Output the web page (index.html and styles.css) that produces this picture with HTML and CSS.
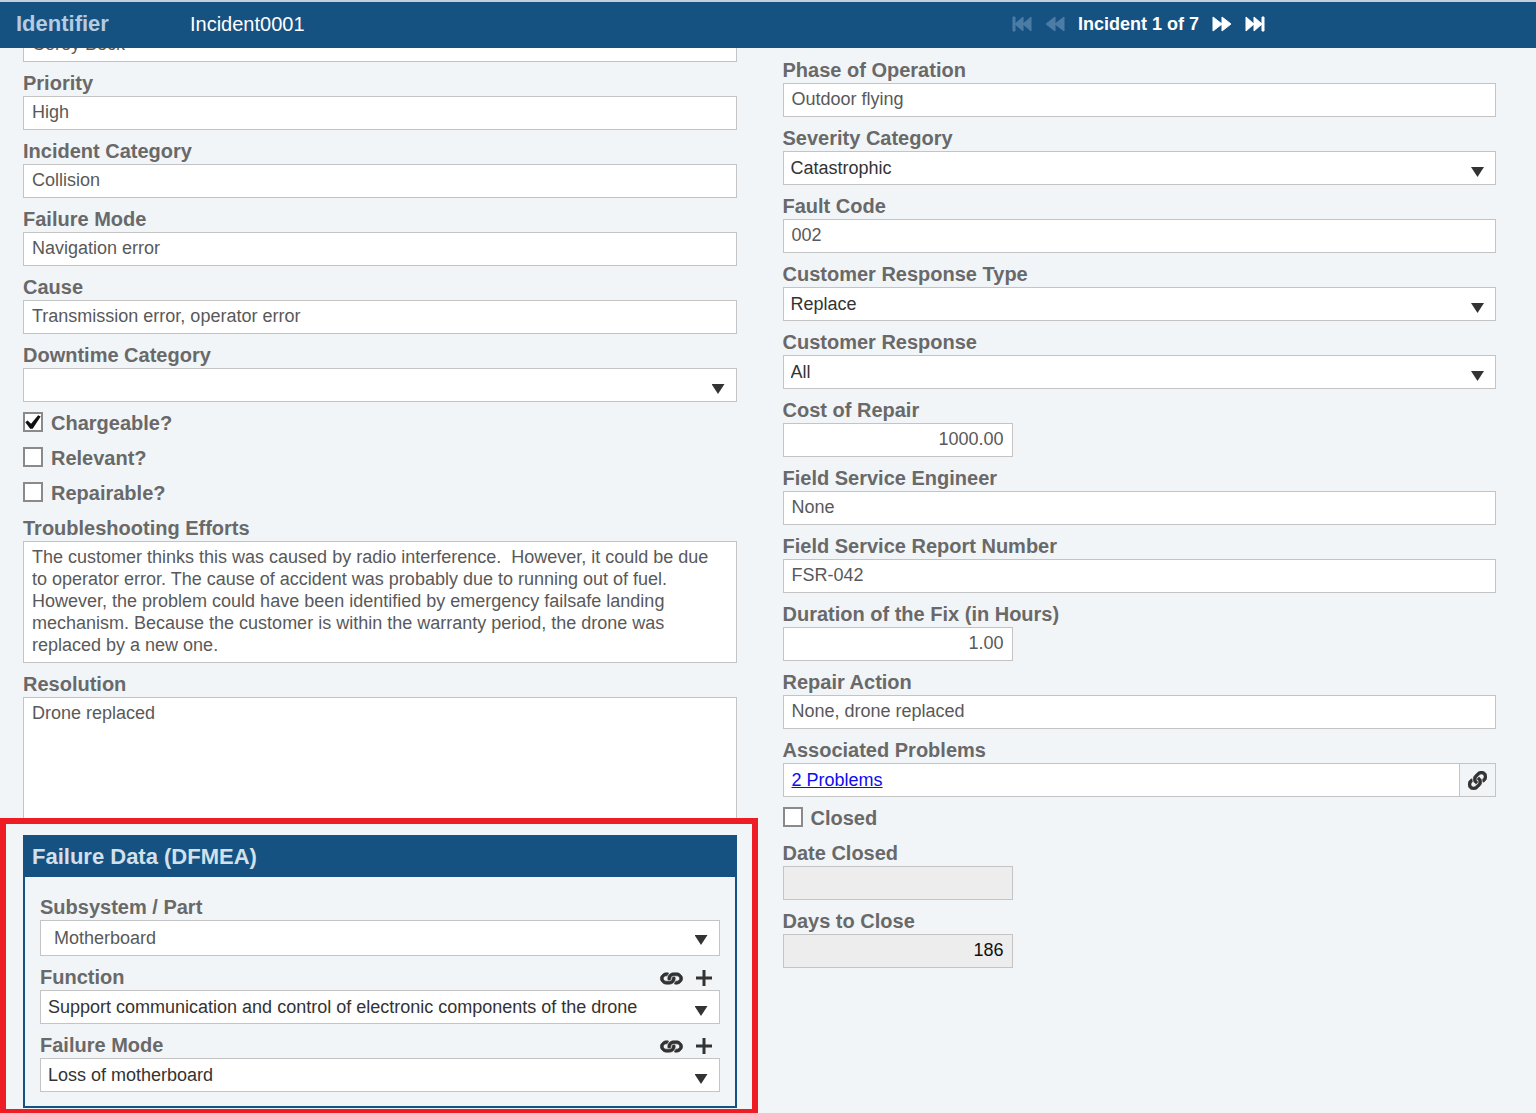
FILE: index.html
```html
<!DOCTYPE html>
<html lang="en">
<head>
<meta charset="UTF-8">
<meta name="viewport" content="width=device-width, initial-scale=1.0">
<title>Incident0001</title>
<link rel="stylesheet" href="styles.css">
</head>
<body>
  <svg class="sprite" aria-hidden="true">
    <symbol id="icon-link" viewBox="0 0 512 512">
      <path d="M326.612 185.391c59.747 59.809 58.927 155.698.36 214.59-.11.12-.24.25-.36.37l-67.2 67.2c-59.27 59.27-155.699 59.262-214.96 0-59.27-59.26-59.27-155.7 0-214.96l37.106-37.106c9.84-9.84 26.786-3.3 27.294 10.606.648 17.722 3.826 35.527 9.69 52.721 1.986 5.822.567 12.262-3.783 16.612l-13.087 13.087c-28.026 28.026-28.905 73.66-1.155 101.96 28.024 28.579 74.086 28.749 102.325.51l67.2-67.19c28.191-28.191 28.073-73.757 0-101.83-3.701-3.694-7.429-6.564-10.341-8.569a16.037 16.037 0 0 1-6.947-12.606c-.396-10.567 3.348-21.456 11.698-29.806l21.054-21.055c5.521-5.521 14.182-6.199 20.584-1.731a152.482 152.482 0 0 1 20.522 17.197zM467.547 44.449c-59.261-59.262-155.69-59.27-214.96 0l-67.2 67.2c-.12.12-.25.25-.36.37-58.566 58.892-59.387 154.781.36 214.59a152.454 152.454 0 0 0 20.521 17.196c6.402 4.468 15.064 3.789 20.584-1.731l21.054-21.055c8.35-8.35 12.094-19.239 11.698-29.806a16.037 16.037 0 0 0-6.947-12.606c-2.912-2.005-6.64-4.875-10.341-8.569-28.073-28.073-28.191-73.639 0-101.83l67.2-67.19c28.239-28.239 74.3-28.069 102.325.51 27.75 28.3 26.872 73.934-1.155 101.96l-13.087 13.087c-4.35 4.35-5.769 10.79-3.783 16.612 5.864 17.194 9.042 34.999 9.69 52.721.509 13.906 17.454 20.446 27.294 10.606l37.106-37.106c59.271-59.259 59.271-155.699.001-214.959z"/>
    </symbol>
    <symbol id="icon-next" viewBox="0 0 20 16">
      <path d="M1 1L10 8V1L19 8L10 15V8L1 15Z" />
    </symbol>
    <symbol id="icon-last" viewBox="0 0 20 16">
      <path d="M1 1L9 8V1L17 8V1H19V15H17V8L9 15V8L1 15Z" />
    </symbol>
  </svg>

  <header class="header">
    <span class="header-label">Identifier</span>
    <span class="header-value">Incident0001</span>
    <nav class="pager">
      <button class="pager-btn flip" aria-label="First incident" disabled><svg><use href="#icon-last"/></svg></button>
      <button class="pager-btn flip" aria-label="Previous incident" disabled><svg><use href="#icon-next"/></svg></button>
      <span class="pager-text">Incident 1 of 7</span>
      <button class="pager-btn" aria-label="Next incident"><svg><use href="#icon-next"/></svg></button>
      <button class="pager-btn" aria-label="Last incident"><svg><use href="#icon-last"/></svg></button>
    </nav>
  </header>

  <main class="form">
    <div class="column column-left">
      <div class="field">
        <input class="control" type="text" aria-label="Reported By" value="Corey Beck">
      </div>
      <div class="field">
        <label for="priority">Priority</label>
        <input class="control" type="text" id="priority" value="High">
      </div>
      <div class="field">
        <label for="incidentCategory">Incident Category</label>
        <input class="control" type="text" id="incidentCategory" value="Collision">
      </div>
      <div class="field">
        <label for="failureMode">Failure Mode</label>
        <input class="control" type="text" id="failureMode" value="Navigation error">
      </div>
      <div class="field">
        <label for="cause">Cause</label>
        <input class="control" type="text" id="cause" value="Transmission error, operator error">
      </div>
      <div class="field">
        <label for="downtime">Downtime Category</label>
        <div class="select">
          <select class="control" id="downtime"><option></option></select>
        </div>
      </div>
      <div class="check">
        <input type="checkbox" id="chargeable" checked>
        <label for="chargeable">Chargeable?</label>
      </div>
      <div class="check">
        <input type="checkbox" id="relevant">
        <label for="relevant">Relevant?</label>
      </div>
      <div class="check">
        <input type="checkbox" id="repairable">
        <label for="repairable">Repairable?</label>
      </div>
      <div class="field">
        <label for="efforts">Troubleshooting Efforts</label>
        <textarea class="control" id="efforts">The customer thinks this was caused by radio interference.  However, it could be due to operator error. The cause of accident was probably due to running out of fuel. However, the problem could have been identified by emergency failsafe landing mechanism. Because the customer is within the warranty period, the drone was replaced by a new one.</textarea>
      </div>
      <div class="field">
        <label for="resolution">Resolution</label>
        <textarea class="control" id="resolution">Drone replaced</textarea>
      </div>

      <section class="panel">
        <h2 class="panel-title">Failure Data (DFMEA)</h2>
        <div class="panel-body">
          <div class="field">
            <label for="part">Subsystem / Part</label>
            <div class="select select-tall">
              <select class="control" id="part"><option>Motherboard</option></select>
            </div>
          </div>
          <div class="field">
            <div class="field-head">
              <label for="function">Function</label>
              <button class="icon-btn icon-btn-link" aria-label="Link function"><svg class="icon-link"><use href="#icon-link"/></svg></button>
              <button class="icon-btn" aria-label="Add function"><svg class="icon-plus" viewBox="0 0 16 16"><path d="M8 0V16M0 8H16"/></svg></button>
            </div>
            <div class="select">
              <select class="control" id="function"><option>Support communication and control of electronic components of the drone</option></select>
            </div>
          </div>
          <div class="field">
            <div class="field-head">
              <label for="dfmeaMode">Failure Mode</label>
              <button class="icon-btn icon-btn-link" aria-label="Link failure mode"><svg class="icon-link"><use href="#icon-link"/></svg></button>
              <button class="icon-btn" aria-label="Add failure mode"><svg class="icon-plus" viewBox="0 0 16 16"><path d="M8 0V16M0 8H16"/></svg></button>
            </div>
            <div class="select">
              <select class="control" id="dfmeaMode"><option>Loss of motherboard</option></select>
            </div>
          </div>
        </div>
      </section>
    </div>

    <div class="column column-right">
      <div class="field">
        <label for="phase">Phase of Operation</label>
        <input class="control" type="text" id="phase" value="Outdoor flying">
      </div>
      <div class="field">
        <label for="severity">Severity Category</label>
        <div class="select">
          <select class="control" id="severity"><option>Catastrophic</option></select>
        </div>
      </div>
      <div class="field">
        <label for="faultCode">Fault Code</label>
        <input class="control" type="text" id="faultCode" value="002">
      </div>
      <div class="field">
        <label for="responseType">Customer Response Type</label>
        <div class="select">
          <select class="control" id="responseType"><option>Replace</option></select>
        </div>
      </div>
      <div class="field">
        <label for="response">Customer Response</label>
        <div class="select">
          <select class="control" id="response"><option>All</option></select>
        </div>
      </div>
      <div class="field">
        <label for="cost">Cost of Repair</label>
        <input class="control number" type="text" id="cost" value="1000.00">
      </div>
      <div class="field">
        <label for="engineer">Field Service Engineer</label>
        <input class="control" type="text" id="engineer" value="None">
      </div>
      <div class="field">
        <label for="report">Field Service Report Number</label>
        <input class="control" type="text" id="report" value="FSR-042">
      </div>
      <div class="field">
        <label for="duration">Duration of the Fix (in Hours)</label>
        <input class="control number" type="text" id="duration" value="1.00">
      </div>
      <div class="field">
        <label for="repair">Repair Action</label>
        <input class="control" type="text" id="repair" value="None, drone replaced">
      </div>
      <div class="field">
        <span class="label" id="problemsLabel">Associated Problems</span>
        <div class="linked" role="group" aria-labelledby="problemsLabel">
          <a href="#problems">2 Problems</a>
          <button class="linked-btn" aria-label="Link problems"><svg class="icon-link"><use href="#icon-link"/></svg></button>
        </div>
      </div>
      <div class="check">
        <input type="checkbox" id="closed">
        <label for="closed">Closed</label>
      </div>
      <div class="field">
        <label for="dateClosed">Date Closed</label>
        <input class="control number" type="text" id="dateClosed" disabled>
      </div>
      <div class="field">
        <label for="daysToClose">Days to Close</label>
        <input class="control number" type="text" id="daysToClose" value="186" disabled>
      </div>
    </div>
  </main>
</body>
</html>
```
FILE: styles.css
```css
* {
  box-sizing: border-box;
}
body {
  margin: 0;
  height: 100vh;
  overflow: hidden;
  display: flex;
  flex-direction: column;
  font-family: "Liberation Sans", Arial, sans-serif;
  font-size: 18px;
  background-color: #f1f5f8;
  color: #333;
}
button {
  padding: 0;
  border: none;
  background: none;
  color: inherit;
  cursor: pointer;
}
.sprite {
  display: none;
}
.header {
  flex: none;
  display: grid;
  grid-template-columns: 174px 1fr 524px;
  align-items: center;
  height: 48px;
  padding: 0 0 2px 16px;
  border-top: 2px solid #c3d0dc;
  background-color: #165281;
  color: white;
}
.header-label {
  font-size: 22px;
  font-weight: bold;
  color: #b4cbe0;
}
.header-value {
  font-size: 20px;
}
.pager {
  display: flex;
  align-items: center;
  gap: 13px;
}
.pager-text {
  font-weight: bold;
}
.pager-btn {
  width: 20px;
  height: 16px;
}
.pager-btn svg {
  display: block;
  width: 20px;
  height: 16px;
  fill: currentColor;
  stroke: currentColor;
  stroke-width: 1;
  stroke-linejoin: round;
}
.pager-btn:disabled {
  color: #4b7ca5;
}
.flip {
  transform: scaleX(-1);
}
.form {
  flex: 1;
  min-height: 0;
  overflow: hidden;
  display: grid;
  grid-template-columns: 1fr 1fr;
  gap: 46px;
  padding: 0 40px 0 23px;
}
.column {
  display: flex;
  flex-direction: column;
  gap: 10px;
}
.column-left {
  margin-top: -20px;
}
.column-right {
  margin-top: 11px;
}
label, .label {
  display: block;
  height: 24px;
  line-height: 23px;
  font-size: 20px;
  font-weight: bold;
  color: #696969;
}
.control {
  display: block;
  width: 100%;
  height: 34px;
  margin: 0;
  padding: 0 8px 1px;
  border: 1px solid #c4c4c4;
  border-radius: 0;
  background-color: white;
  font: inherit;
  color: #595959;
}
textarea.control {
  height: 122px;
  padding: 4px 8px;
  line-height: 22px;
  resize: none;
  overflow: hidden;
}
.number {
  width: 230px;
  text-align: right;
}
.control:disabled {
  background-color: #ededed;
  color: #111;
}
.select {
  position: relative;
}
.select::after {
  content: "";
  position: absolute;
  right: 12px;
  bottom: 8px;
  width: 13px;
  height: 10px;
  background-color: #333;
  clip-path: polygon(0 0, 100% 0, 50% 100%);
  pointer-events: none;
}
.select select {
  appearance: none;
  padding: 0 7px;
  color: #333;
}
.select-tall select {
  height: 36px;
  padding: 0 13px;
  color: #595959;
}
.select-tall::after {
  bottom: 11px;
}
.check {
  display: flex;
  gap: 8px;
  height: 25px;
}
.check input {
  appearance: none;
  display: grid;
  place-items: center;
  width: 20px;
  height: 20px;
  margin: 0;
  border: 2px solid #8a8a8a;
  background-color: white;
}
.check input:checked::before {
  content: "";
  width: 16px;
  height: 14px;
  background-color: #111;
  clip-path: polygon(2% 52%, 16% 40%, 38% 62%, 82% 2%, 98% 10%, 48% 98%, 32% 98%);
}
.linked {
  display: flex;
  align-items: center;
  height: 34px;
  border: 1px solid #c4c4c4;
  background-color: white;
}
.linked a {
  flex: 1;
  padding-left: 8px;
  color: #0d0df0;
}
.linked-btn {
  display: grid;
  place-items: center;
  width: 36px;
  height: 32px;
  border-left: 1px solid #c4c4c4;
  background-color: #f1f5f8;
}
.icon-link {
  width: 19px;
  height: 19px;
  overflow: visible;
  fill: #333;
  stroke: #333;
  stroke-width: 16;
}
.icon-link use {
  overflow: visible;
}
.icon-plus {
  width: 16px;
  height: 16px;
  stroke: #333;
  stroke-width: 3;
}
.field-head {
  display: flex;
  align-items: center;
  gap: 15px;
  padding-right: 8px;
}
.field-head label {
  flex: 1;
}
.icon-btn svg {
  display: block;
}
.icon-btn-link svg {
  transform: rotate(45deg);
}
/* highlighted group */
.panel {
  position: relative;
  margin-top: 6px;
  border: 2px solid #165281;
}
.panel::after {
  content: "";
  position: absolute;
  inset: -19px -23px -9px -25px;
  border: 6px solid #ee1c25;
  pointer-events: none;
}
.panel-title {
  margin: 0;
  padding-left: 7px;
  font-size: 22px;
  line-height: 40px;
  background-color: #165281;
  color: #d3e0ec;
}
.panel-body {
  display: flex;
  flex-direction: column;
  gap: 10px;
  padding: 19px 15px 14px;
}
```
